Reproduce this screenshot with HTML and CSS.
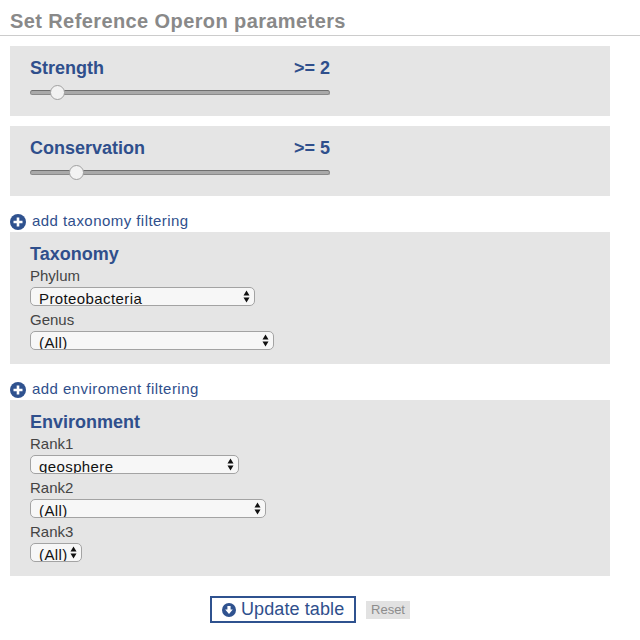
FILE: index.html
```html
<!DOCTYPE html>
<html lang="en">
<head>
    <meta charset="UTF-8">
    <title>Set Reference Operon parameters</title>
    <link rel="stylesheet" href="styles.css">
</head>
<body>
    <h2 class="page-title">Set Reference Operon parameters</h2>
    <div class="panel slider-panel">
        <div class="slider-head">
            <span class="panel-title">Strength</span>
            <span class="panel-title">&gt;= 2</span>
        </div>
        <input type="range" class="slider" min="1" max="15.7" value="2" step="0.1">
    </div>
    <div class="panel slider-panel">
        <div class="slider-head">
            <span class="panel-title">Conservation</span>
            <span class="panel-title">&gt;= 5</span>
        </div>
        <input type="range" class="slider" min="1" max="30.6" value="5" step="0.1">
    </div>
    <a class="add-link" href="#">
        <svg class="add-icon" viewBox="0 0 16 16"><circle cx="8" cy="8" r="8" fill="#2f528f"/><path d="M8 3.5v9M3.5 8h9" stroke="#fff" stroke-width="2.6"/></svg>
        add taxonomy filtering
    </a>
    <div class="panel filter-panel">
        <div class="panel-title">Taxonomy</div>
        <label class="field-label">Phylum</label>
        <div class="select-box w-phylum">
            <select><option>Proteobacteria</option></select>
            <svg class="select-arrows" viewBox="0 0 7 13"><path d="M3.5 0.5 6.5 5.5H0.5zM3.5 12.5 0.5 7.5H6.5z" fill="#111"/></svg>
        </div>
        <label class="field-label">Genus</label>
        <div class="select-box w-genus">
            <select><option>(All)</option></select>
            <svg class="select-arrows" viewBox="0 0 7 13"><path d="M3.5 0.5 6.5 5.5H0.5zM3.5 12.5 0.5 7.5H6.5z" fill="#111"/></svg>
        </div>
    </div>
    <a class="add-link" href="#">
        <svg class="add-icon" viewBox="0 0 16 16"><circle cx="8" cy="8" r="8" fill="#2f528f"/><path d="M8 3.5v9M3.5 8h9" stroke="#fff" stroke-width="2.6"/></svg>
        add enviroment filtering
    </a>
    <div class="panel filter-panel env-panel">
        <div class="panel-title">Environment</div>
        <label class="field-label">Rank1</label>
        <div class="select-box w-rank1">
            <select><option>geosphere</option></select>
            <svg class="select-arrows" viewBox="0 0 7 13"><path d="M3.5 0.5 6.5 5.5H0.5zM3.5 12.5 0.5 7.5H6.5z" fill="#111"/></svg>
        </div>
        <label class="field-label">Rank2</label>
        <div class="select-box w-rank2">
            <select><option>(All)</option></select>
            <svg class="select-arrows" viewBox="0 0 7 13"><path d="M3.5 0.5 6.5 5.5H0.5zM3.5 12.5 0.5 7.5H6.5z" fill="#111"/></svg>
        </div>
        <label class="field-label">Rank3</label>
        <div class="select-box w-rank3">
            <select><option>(All)</option></select>
            <svg class="select-arrows" viewBox="0 0 7 13"><path d="M3.5 0.5 6.5 5.5H0.5zM3.5 12.5 0.5 7.5H6.5z" fill="#111"/></svg>
        </div>
    </div>
    <div class="actions">
        <button type="button" class="update-btn">
            <svg class="update-icon" viewBox="0 0 14 14"><circle cx="7" cy="7" r="7" fill="#2f528f"/><path d="M5.4 3h3.2v3.6h2.2L7 11 3.2 6.6h2.2z" fill="#fff"/></svg>
            Update table
        </button>
        <button type="button" class="reset-btn">Reset</button>
    </div>
</body>
</html>
```

FILE: styles.css
```css
body {
    font-family: "Liberation Sans", Arial, sans-serif;
    margin: 0;
    padding: 0 0 0 10px;
    background: #fff;
}
.page-title {
    margin: 0 0 10px -10px;
    padding: 10px 0 3px 10px;
    height: 22px;
    font-size: 20px;
    line-height: 22px;
    font-weight: bold;
    color: #898989;
    border-bottom: 1px solid #ccc;
    letter-spacing: 0.4px;
}
.panel {
    width: 600px;
    box-sizing: border-box;
    background: #e5e5e5;
    padding: 0 20px;
}
.slider-panel {
    height: 70px;
    margin-bottom: 10px;
    padding-top: 11px;
}
.slider-head {
    width: 300px;
    display: flex;
    justify-content: space-between;
}
.panel-title {
    font-size: 18px;
    line-height: 22px;
    font-weight: bold;
    color: #2f4f8c;
}
.slider {
    -webkit-appearance: none;
    appearance: none;
    display: block;
    width: 300px;
    height: 18px;
    margin: 4px 0 0;
    background: transparent;
}
.slider::-webkit-slider-runnable-track {
    height: 5px;
    border-radius: 3px;
    background: #a9a9a9;
    border: 1px solid #8a8a8a;
    border-top-color: #6f6f6f;
    box-sizing: border-box;
}
.slider::-webkit-slider-thumb {
    -webkit-appearance: none;
    width: 15px;
    height: 15px;
    margin-top: -6px;
    border-radius: 50%;
    border: 1px solid #a0a0a0;
    background: #f2f2f2;
    box-sizing: border-box;
}
.add-link {
    display: flex;
    align-items: center;
    gap: 6px;
    height: 20px;
    margin: 15px 0 1px;
    padding-bottom: 2px;
    box-sizing: border-box;
    font-size: 15px;
    letter-spacing: 0.45px;
    color: #2f4f8c;
    text-decoration: none;
}
.add-icon {
    width: 16px;
    height: 16px;
    margin-top: 4px;
}
.filter-panel {
    height: 132px;
    padding-top: 11px;
}
.env-panel {
    height: 176px;
}
.field-label {
    display: block;
    font-size: 15px;
    line-height: 16px;
    height: 16px;
    padding-top: 3px;
    color: #444;
}
.select-box {
    position: relative;
    height: 19px;
    margin: 3px 0;
}
.select-box select {
    -webkit-appearance: none;
    appearance: none;
    display: block;
    width: 100%;
    height: 19px;
    box-sizing: border-box;
    padding: 2px 0 0 8px;
    border: 1px solid #a3a3a3;
    border-radius: 5px;
    background: #f7f7f7;
    font-family: "Liberation Sans", Arial, sans-serif;
    font-size: 15px;
    letter-spacing: 0.4px;
    color: #111;
    overflow: hidden;
}
.select-arrows {
    position: absolute;
    right: 5px;
    top: 3px;
    width: 7px;
    height: 13px;
}
.w-phylum { width: 225px; }
.w-genus { width: 244px; }
.w-rank1 { width: 209px; }
.w-rank2 { width: 236px; }
.w-rank3 { width: 52px; }
.actions {
    display: flex;
    justify-content: center;
    align-items: center;
    gap: 10px;
    width: 600px;
    margin-top: 20px;
}
.update-btn {
    display: flex;
    align-items: center;
    gap: 5px;
    width: 146px;
    height: 27px;
    box-sizing: border-box;
    padding: 0 0 0 10px;
    border: 2px solid #2f528f;
    background: #fff;
    color: #2f4f8c;
    font-family: "Liberation Sans", Arial, sans-serif;
    font-size: 18px;
    letter-spacing: 0.1px;
    white-space: nowrap;
}
.update-icon {
    width: 14px;
    height: 14px;
}
.reset-btn {
    width: 44px;
    height: 18px;
    padding: 0;
    border: none;
    background: #e2e2e2;
    color: #8c8c8c;
    font-family: "Liberation Sans", Arial, sans-serif;
    font-size: 13px;
}
```
